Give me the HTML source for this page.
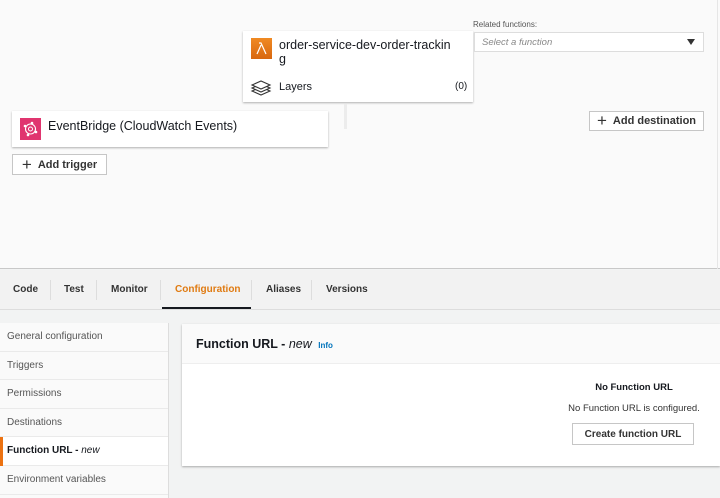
<!DOCTYPE html>
<html><head><meta charset="utf-8"><style>
*{box-sizing:border-box;margin:0;padding:0}
body{width:720px;height:498px;overflow:hidden;background:#f2f3f3;font-family:"Liberation Sans",sans-serif;color:#16191f;position:relative}
.abs{position:absolute}
.top{left:0;top:0;width:720px;height:269px;background:#fafafa;border-bottom:1px solid #c8c8c8}
.card{background:#fff;box-shadow:0 1px 2px rgba(0,0,0,.3)}
.btn{background:#fff;border:1px solid #c6c6c6;font-weight:bold;font-size:11px;color:#333;display:flex;align-items:center;justify-content:center;gap:6px}
.tabs{left:0;top:270px;width:720px;height:40px;background:#f2f2f2;border-bottom:1px solid #ddd;font-size:10px;font-weight:bold;color:#333}
.tab{position:absolute;top:0;height:40px;line-height:40px}
.sep{position:absolute;top:10px;width:1px;height:20px;background:#ddd}
.side{left:0;top:323px;width:168px;height:175px;background:#fafafa}
.si{height:28.6px;line-height:28px;padding-left:7px;font-size:10px;color:#555;border-bottom:1px solid #eaeaea}
</style></head><body>
<div class="abs top"></div>
<div class="abs" style="left:717px;top:0;width:1px;height:269px;background:#e6e6e6"></div>
<div class="abs card" style="left:243px;top:31px;width:230px;height:71px"></div>
<div class="abs" style="left:251px;top:38px;width:21px;height:21px;background:linear-gradient(#f08a24,#d8670f)">
<svg width="21" height="21" viewBox="0 0 21 21"><path d="M6 16 L10 7 M8 5 L10 5 L15 16" stroke="#fff" stroke-width="1.2" fill="none"/></svg></div>
<div class="abs" style="left:279px;top:38px;font-size:12.5px;line-height:14px;width:176px;word-break:break-all">order-service-dev-order-tracking</div>
<svg class="abs" style="left:250px;top:78px" width="22" height="20" viewBox="0 0 22 20"><g fill="#fff" stroke="#333" stroke-width="1.1"><path d="M2 13 L11 17 L20 13 L11 9Z"/><path d="M2 10 L11 14 L20 10 L11 6Z"/><path d="M2 7 L11 11 L20 7 L11 3Z"/></g></svg>
<div class="abs" style="left:279px;top:81px;font-size:11px">Layers</div>
<div class="abs" style="left:455px;top:81px;font-size:10px">(0)</div>
<div class="abs" style="left:473px;top:20px;font-size:8px;color:#555">Related functions:</div>
<div class="abs" style="left:474px;top:32px;width:230px;height:20px;background:#fff;border:1px solid #ddd;font-size:9.5px;font-style:italic;color:#888;padding:4px 0 0 7px">Select a function</div>
<div class="abs" style="left:687px;top:39px;width:0;height:0;border-left:4px solid transparent;border-right:4px solid transparent;border-top:6px solid #333"></div>
<div class="abs" style="left:344px;top:104px;width:3px;height:25px;background:#ececec"></div>
<div class="abs card" style="left:12px;top:111px;width:316px;height:36px"></div>
<div class="abs" style="left:20px;top:118px;width:21px;height:22px;background:#e0356f">
<svg width="21" height="22" viewBox="0 0 21 22"><circle cx="10.5" cy="11" r="5" stroke="#fff" fill="none" stroke-width="1.1"/><circle cx="10.5" cy="11" r="2" stroke="#fff" fill="none" stroke-width="1"/><circle cx="5" cy="8" r="1.3" fill="#fff"/><circle cx="16" cy="14" r="1.3" fill="#fff"/><circle cx="12" cy="5" r="1.3" fill="#fff"/><circle cx="8" cy="17" r="1.3" fill="#fff"/></svg></div>
<div class="abs" style="left:48px;top:119px;font-size:12.5px">EventBridge (CloudWatch Events)</div>
<div class="abs btn" style="left:12px;top:154px;width:95px;height:21px"><span style="font-size:17px;font-weight:normal;line-height:10px">+</span>Add trigger</div>
<div class="abs btn" style="left:589px;top:111px;width:115px;height:20px"><span style="font-size:17px;font-weight:normal;line-height:10px">+</span>Add destination</div>
<div class="abs tabs">
<div class="tab" style="left:13px">Code</div><div class="sep" style="left:50px"></div>
<div class="tab" style="left:64px">Test</div><div class="sep" style="left:96px"></div>
<div class="tab" style="left:111px">Monitor</div><div class="sep" style="left:160px"></div>
<div class="tab" style="left:175px;color:#e07b12">Configuration</div>
<div class="abs" style="left:162px;top:37px;width:89px;height:2px;background:#16191f"></div>
<div class="sep" style="left:251px"></div>
<div class="tab" style="left:266px">Aliases</div><div class="sep" style="left:311px"></div>
<div class="tab" style="left:326px">Versions</div>
</div>
<div class="abs side">
<div class="si">General configuration</div>
<div class="si">Triggers</div>
<div class="si">Permissions</div>
<div class="si">Destinations</div>
<div class="si" style="background:#fff;font-weight:bold;color:#16191f">Function URL - <i style="font-weight:normal">new</i></div>
<div class="si">Environment variables</div>
</div>
<div class="abs" style="left:0;top:437px;width:3px;height:29px;background:#ec7211"></div>
<div class="abs" style="left:168px;top:323px;width:1px;height:175px;background:#ddd"></div>
<div class="abs card" style="left:182px;top:324px;width:538px;height:142px"></div>
<div class="abs" style="left:182px;top:324px;width:538px;height:40px;background:#fafafa;border-bottom:1px solid #eee"></div>
<div class="abs" style="left:196px;top:337px;font-size:12.5px;font-weight:bold">Function URL - <i style="font-weight:normal">new</i> <span style="font-size:8px;color:#0073bb;margin-left:3px">Info</span></div>
<div class="abs" style="left:560px;top:382px;font-size:9.5px;font-weight:bold;text-align:center;width:148px">No Function URL</div>
<div class="abs" style="left:560px;top:403px;width:148px;font-size:9.5px;text-align:center;color:#333">No Function URL is configured.</div>
<div class="abs btn" style="left:572px;top:423px;width:122px;height:22px;font-size:10px">Create function URL</div>
</body></html>
